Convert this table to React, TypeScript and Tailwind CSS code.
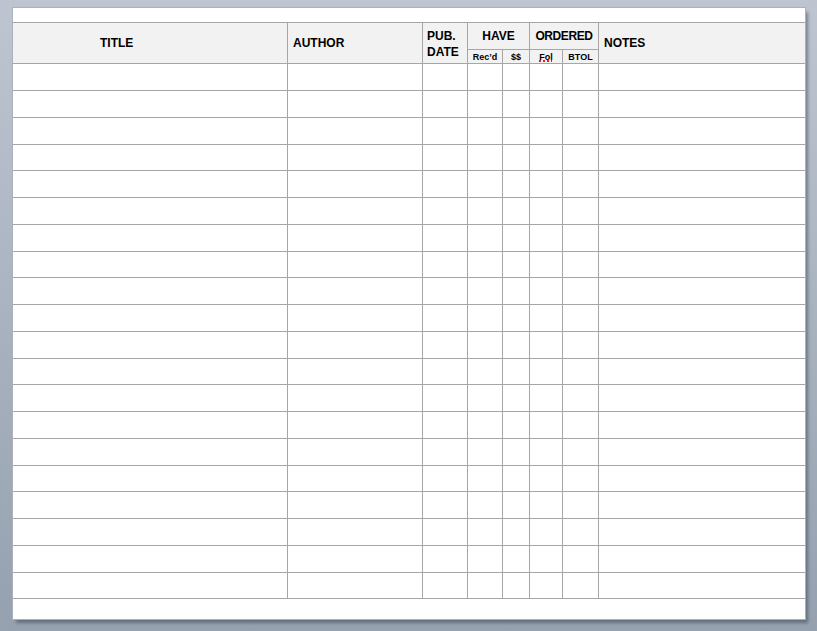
import React from 'react';

const cols = 'grid grid-cols-[274px_135px_45px_35px_27px_33px_36px_207px]';
const line = 'border-[#a6a6a6]';
const rowHeights = Array.from({ length: 20 }, (_, i) => (i % 4 === 3 ? 'h-[26px]' : 'h-[27px]'));

const HeaderCell = ({ className = '', children }: { className?: string; children?: React.ReactNode }) => (
  <div className={`bg-[#f2f2f2] border-b ${line} flex items-center ${className}`}>{children}</div>
);

const Row = ({ h }: { h: string }) => (
  <div className={`${cols} ${h}`}>
    {Array.from({ length: 8 }).map((_, i) => (
      <div key={i} className={`border-b ${line} ${i > 0 ? 'border-l' : ''}`} />
    ))}
  </div>
);

export default function App() {
  return (
    <div className="w-[817px] h-[631px] overflow-hidden bg-gradient-to-b from-[#bec5d1] to-[#95a1af] pt-[8px] pl-[13px]">
      <div className="w-[792px] h-[611px] bg-white pt-[14px] shadow-[0_0_0_1px_#aab1bc,3px_4px_3px_rgba(40,50,65,0.45)] font-['Liberation_Sans',Arial,sans-serif] text-black">
        <div className={`border-t ${line}`}>
          <div className={`${cols} grid-rows-[27px_14px] font-bold text-[12px] leading-[16px]`}>
            <HeaderCell className="row-span-2 pl-[87px]">TITLE</HeaderCell>
            <HeaderCell className="row-span-2 border-l pl-[5px]">AUTHOR</HeaderCell>
            <HeaderCell className="row-span-2 border-l pl-[4px]">
              <div className="pt-[1px]">PUB.<br />DATE</div>
            </HeaderCell>
            <HeaderCell className="col-span-2 border-l justify-center">HAVE</HeaderCell>
            <HeaderCell className="col-span-2 border-l justify-center tracking-[-0.4px]">ORDERED</HeaderCell>
            <HeaderCell className="row-span-2 border-l pl-[5px]">NOTES</HeaderCell>
            <HeaderCell className="border-l justify-center text-[9px] leading-[12px]">Rec’d</HeaderCell>
            <HeaderCell className="border-l justify-center text-[9px] leading-[12px]">$$</HeaderCell>
            <HeaderCell className="border-l justify-center text-[9px] leading-[12px]">
              <span className="underline decoration-dotted decoration-[#e02020] decoration-[1.5px] underline-offset-[1px]">Fol</span>
            </HeaderCell>
            <HeaderCell className="border-l justify-center text-[9px] leading-[12px]">BTOL</HeaderCell>
          </div>
          {rowHeights.map((h, i) => (
            <Row key={i} h={h} />
          ))}
        </div>
      </div>
    </div>
  );
}
